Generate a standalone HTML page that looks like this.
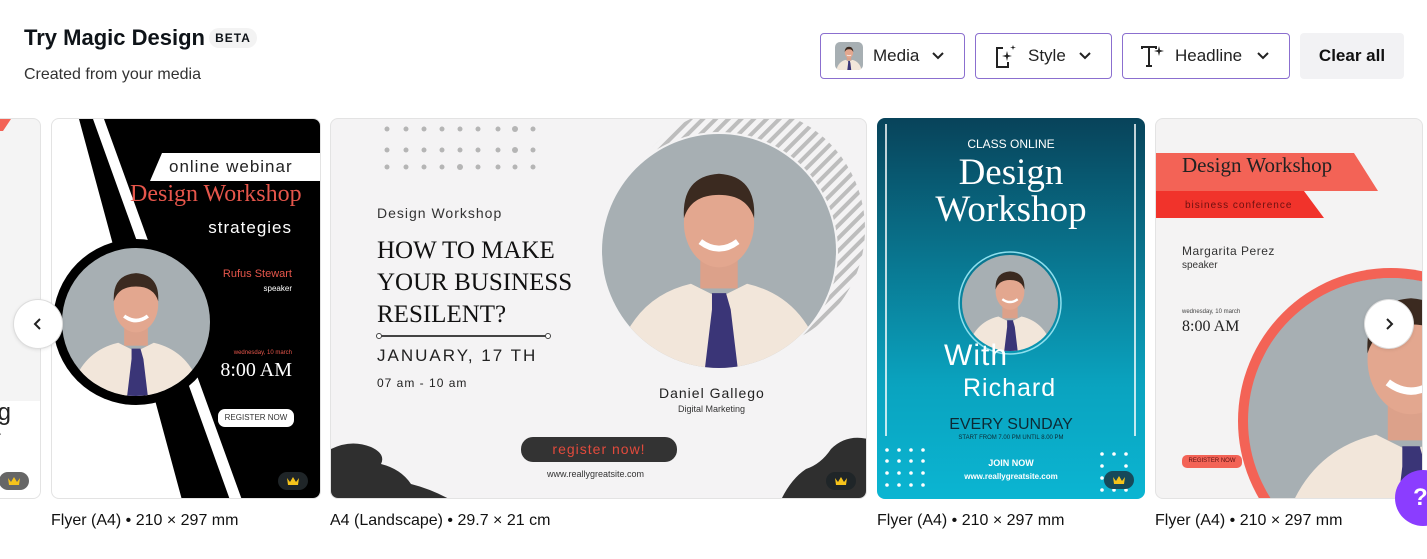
<!DOCTYPE html>
<html><head><meta charset="utf-8">
<style>
*{margin:0;padding:0;box-sizing:border-box}
body{width:1427px;height:559px;overflow:hidden;background:#fff;font-family:"Liberation Sans",sans-serif;position:relative;color:#0e1318}
.abs{position:absolute}
.btn{position:absolute;top:33px;height:46px;border:1.5px solid #8b6fcf;border-radius:4px;display:flex;align-items:center;font-size:17px;color:#222}
.card{position:absolute;top:118px;height:381px;border-radius:8px;overflow:hidden;border:1px solid #e3e3e3}
.cap{position:absolute;top:512px;font-size:16px;color:#111}
.crown{position:absolute;width:30px;height:18px;border-radius:9px;background:#1f2528;display:flex;align-items:center;justify-content:center}
.serif{font-family:"Liberation Serif",serif}
.arrow{position:absolute;width:48px;height:48px;border-radius:50%;background:#fff;box-shadow:0 0 0 1px #ddd,0 1px 4px rgba(0,0,0,.15);display:flex;align-items:center;justify-content:center}
</style></head><body>
<svg width="0" height="0" style="position:absolute">
<defs>
<symbol id="p" viewBox="0 0 100 100">
<rect width="100" height="100" fill="#a7afb3"/>
<path d="M5 100 Q12 70 38 64 L50 70 L62 64 Q88 70 95 100Z" fill="#f2e6da"/>
<path d="M47 68 L53 68 L55 75 L58 100 L44 100 L47 75Z" fill="#3a3577"/>
<rect x="42" y="50" width="16" height="16" fill="#dca18a"/>
<ellipse cx="50" cy="38" rx="15" ry="19" fill="#e3a78f"/>
<path d="M35 36 Q34 18 50 17 Q66 18 65 36 Q62 26 50 26 Q38 26 35 36Z" fill="#3b2a20"/>
<path d="M42 46 Q50 52 58 46" stroke="#fff" stroke-width="2.5" fill="none"/>
</symbol>
<symbol id="cr" viewBox="0 0 14 10"><path d="M1 2 L4 6 L7 1 L10 6 L13 2 L12 9 L2 9Z" fill="#f5c31b"/></symbol>
</defs></svg>

<div class="abs" style="left:24px;top:25px;font-size:22px;font-weight:bold;color:#0e1318">Try Magic Design</div>
<div class="abs" style="left:209px;top:28px;width:48px;height:20px;border-radius:10px;background:#f3f3f3;font-size:12px;font-weight:bold;letter-spacing:1px;text-align:center;line-height:20px">BETA</div>
<div class="abs" style="left:24px;top:66px;font-size:16px;color:#333">Created from your media</div>

<div class="btn" style="left:820px;width:145px"><svg style="margin-left:14px" width="28" height="28"><defs><clipPath id="r"><rect width="28" height="28" rx="5"/></clipPath></defs><g clip-path="url(#r)"><use href="#p" width="28" height="28"/></g></svg><span style="margin-left:10px">Media</span><svg style="margin-left:12px" width="14" height="10"><path d="M2 2 L7 7 L12 2" stroke="#222" stroke-width="2" fill="none"/></svg></div>
<div class="btn" style="left:975px;width:137px"><svg style="margin-left:18px" width="24" height="26"><path d="M9 5 H3 V24 H14 V19" stroke="#222" stroke-width="2" fill="none"/><path d="M13 8 L14 12 L18 13 L14 14 L13 18 L12 14 L8 13 L12 12Z M19 2 L19.7 4 L22 4.5 L19.7 5 L19 7 L18.3 5 L16 4.5 L18.3 4Z" fill="#222"/></svg><span style="margin-left:10px">Style</span><svg style="margin-left:12px" width="14" height="10"><path d="M2 2 L7 7 L12 2" stroke="#222" stroke-width="2" fill="none"/></svg></div>
<div class="btn" style="left:1122px;width:168px"><svg style="margin-left:16px" width="26" height="26"><path d="M3 6 V4 H17 V6 M10 4 V23 M7 23 H13" stroke="#222" stroke-width="2" fill="none"/><path d="M20 3 L21 7 L25 8 L21 9 L20 13 L19 9 L15 8 L19 7Z" fill="#222"/></svg><span style="margin-left:10px">Headline</span><svg style="margin-left:14px" width="14" height="10"><path d="M2 2 L7 7 L12 2" stroke="#222" stroke-width="2" fill="none"/></svg></div>
<div class="abs" style="left:1300px;top:33px;width:104px;height:46px;border-radius:4px;background:#f2f2f4;font-size:17px;font-weight:bold;text-align:center;line-height:46px;color:#111">Clear all</div>

<!-- card0 partial -->
<div class="card" style="left:-10px;width:51px;background:#f4f4f4">
<div class="abs" style="left:0;top:0;width:20px;height:12px;background:#f36356;clip-path:polygon(0 0,100% 0,60% 100%,0 100%)"></div>
<div class="abs" style="left:0;top:282px;width:51px;height:100px;background:#fff"></div>
<div class="abs" style="left:0;top:280px;font-size:24px;color:#222">&nbsp;g</div>
<div class="abs" style="left:0;top:310px;font-size:16px;color:#222">&nbsp;r</div>
<div class="crown" style="left:8px;top:353px;background:#666"><svg width="14" height="10"><use href="#cr"/></svg></div>
</div>

<!-- card1 -->
<div class="card" style="left:51px;width:270px;background:#fff">
<svg class="abs" style="left:0;top:0" width="270" height="381">
<defs><clipPath id="c1"><circle cx="84" cy="203" r="74"/></clipPath></defs>
<polygon points="27,0 270,0 270,381 130,381" fill="#000"/>
<polygon points="41,0 52,0 190,381 178,381" fill="#fff"/>
<circle cx="84" cy="203" r="83" fill="#000"/>
<g clip-path="url(#c1)"><use href="#p" x="10" y="129" width="148" height="148"/></g>
<polygon points="110,34 270,34 270,62 98,62" fill="#fff"/>
</svg>
<div class="abs" style="left:117px;top:38px;font-size:17px;letter-spacing:1px;color:#222">online webinar</div>
<div class="abs serif" style="left:78px;top:62px;font-size:24px;color:#e6564b">Design Workshop</div>
<div class="abs" style="right:28px;top:99px;font-size:17px;letter-spacing:1px;color:#fff">strategies</div>
<div class="abs" style="right:28px;top:149px;font-size:11px;color:#e6564b">Rufus Stewart</div>
<div class="abs" style="right:28px;top:165px;font-size:8px;color:#fff">speaker</div>
<div class="abs" style="right:28px;top:231px;font-size:6px;color:#e6564b">wednesday, 10 march</div>
<div class="abs serif" style="right:28px;top:240px;font-size:20px;color:#fff">8:00 AM</div>
<div class="abs" style="left:166px;top:290px;width:76px;height:18px;background:#fff;border-radius:7px;font-size:8px;text-align:center;line-height:18px;color:#333">REGISTER NOW</div>
<div class="crown" style="left:226px;top:353px"><svg width="14" height="10"><use href="#cr"/></svg></div>
</div>
<div class="cap" style="left:51px">Flyer (A4) • 210 × 297 mm</div>

<!-- card2 -->
<div class="card" style="left:330px;width:537px;background:#f4f3f4">
<svg class="abs" style="left:0;top:0" width="537" height="381">
<defs><pattern id="st" width="9" height="9" patternUnits="userSpaceOnUse" patternTransform="rotate(45)"><rect width="4" height="9" fill="#bdbdbd"/></pattern>
<clipPath id="c2"><circle cx="388" cy="132" r="117"/></clipPath></defs>
<g fill="#b5b5b5">
<circle cx="56" cy="10" r="2.5"/><circle cx="75" cy="10" r="2.5"/><circle cx="93" cy="10" r="2.5"/><circle cx="111" cy="10" r="2.5"/><circle cx="129" cy="10" r="2.5"/><circle cx="147" cy="10" r="2.5"/><circle cx="167" cy="10" r="2.5"/><circle cx="184" cy="10" r="3"/><circle cx="202" cy="10" r="2.5"/>
<circle cx="56" cy="31" r="2.5"/><circle cx="75" cy="31" r="2.5"/><circle cx="93" cy="31" r="2.5"/><circle cx="111" cy="31" r="2.5"/><circle cx="129" cy="31" r="2.5"/><circle cx="147" cy="31" r="2.5"/><circle cx="167" cy="31" r="2.5"/><circle cx="184" cy="31" r="3"/><circle cx="202" cy="31" r="2.5"/>
<circle cx="56" cy="48" r="2.5"/><circle cx="75" cy="48" r="2.5"/><circle cx="93" cy="48" r="2.5"/><circle cx="111" cy="48" r="2.5"/><circle cx="129" cy="48" r="3"/><circle cx="147" cy="48" r="2.5"/><circle cx="167" cy="48" r="2.5"/><circle cx="184" cy="48" r="2.5"/><circle cx="202" cy="48" r="2.5"/>
</g>
<circle cx="412" cy="110" r="122" fill="url(#st)"/>
<circle cx="388" cy="132" r="119" fill="#f4f3f4"/>
<g clip-path="url(#c2)"><use href="#p" x="271" y="15" width="234" height="234"/></g>
<line x1="48" y1="217" x2="217" y2="217" stroke="#444" stroke-width="2"/>
<circle cx="48" cy="217" r="2.5" fill="#fff" stroke="#444"/><circle cx="217" cy="217" r="2.5" fill="#fff" stroke="#444"/>
<path d="M0 330 Q20 320 40 328 Q55 335 50 345 Q70 350 80 365 Q100 370 120 381 L0 381Z" fill="#2f2f2f"/>
<path d="M537 320 Q515 315 500 330 Q490 345 475 350 Q460 360 450 381 L537 381Z" fill="#2f2f2f"/>
</svg>
<div class="abs" style="left:46px;top:86px;font-size:14px;letter-spacing:1px;color:#333">Design Workshop</div>
<div class="abs serif" style="left:46px;top:116px;font-size:25px;line-height:32px;color:#111">HOW TO MAKE<br>YOUR BUSINESS<br>RESILENT?</div>
<div class="abs" style="left:46px;top:227px;font-size:17px;letter-spacing:2px;color:#222">JANUARY, 17 TH</div>
<div class="abs" style="left:46px;top:257px;font-size:12px;letter-spacing:1px;color:#222">07 am - 10 am</div>
<div class="abs" style="left:328px;top:266px;font-size:14px;letter-spacing:1px;color:#222">Daniel Gallego</div>
<div class="abs" style="left:347px;top:285px;font-size:9px;color:#333">Digital Marketing</div>
<div class="abs" style="left:190px;top:318px;width:156px;height:25px;border-radius:12px;background:#333;color:#e24a3c;font-size:14px;text-align:center;line-height:25px;letter-spacing:1px">register now!</div>
<div class="abs" style="left:216px;top:350px;font-size:9px;color:#333">www.reallygreatsite.com</div>
<div class="crown" style="left:495px;top:353px"><svg width="14" height="10"><use href="#cr"/></svg></div>
</div>
<div class="cap" style="left:330px">A4 (Landscape) • 29.7 × 21 cm</div>

<!-- card3 -->
<div class="card" style="left:877px;width:268px;background:linear-gradient(#08435a,#0aa3bf 70%,#0bb5d2);border:none">
<svg class="abs" style="left:0;top:0" width="268" height="381">
<defs><clipPath id="c3"><circle cx="133" cy="185" r="48"/></clipPath></defs>
<line x1="9" y1="6" x2="9" y2="318" stroke="#fff" stroke-width="1.5"/>
<line x1="258" y1="6" x2="258" y2="318" stroke="#fff" stroke-width="1.5"/>
<g clip-path="url(#c3)"><use href="#p" x="85" y="137" width="96" height="96"/></g>
<circle cx="133" cy="185" r="51" fill="none" stroke="#8fe0ee" stroke-width="1.5"/>
<g fill="#fff"><circle cx="10" cy="332" r="1.8"/><circle cx="22" cy="332" r="1.8"/><circle cx="34" cy="332" r="1.8"/><circle cx="46" cy="332" r="1.8"/><circle cx="10" cy="343" r="1.8"/><circle cx="22" cy="343" r="1.8"/><circle cx="34" cy="343" r="1.8"/><circle cx="46" cy="343" r="1.8"/><circle cx="10" cy="355" r="1.8"/><circle cx="22" cy="355" r="1.8"/><circle cx="34" cy="355" r="1.8"/><circle cx="46" cy="355" r="1.8"/><circle cx="10" cy="367" r="1.8"/><circle cx="22" cy="367" r="1.8"/><circle cx="34" cy="367" r="1.8"/><circle cx="46" cy="367" r="1.8"/>
<circle cx="225" cy="336" r="1.8"/><circle cx="237" cy="336" r="1.8"/><circle cx="249" cy="336" r="1.8"/><circle cx="225" cy="348" r="1.8"/><circle cx="249" cy="348" r="1.8"/><circle cx="225" cy="360" r="1.8"/><circle cx="249" cy="360" r="1.8"/><circle cx="225" cy="372" r="1.8"/><circle cx="237" cy="372" r="1.8"/><circle cx="249" cy="372" r="1.8"/></g>
</svg>
<div class="abs" style="left:0;width:268px;top:19px;text-align:center;font-size:12px;color:#fff">CLASS ONLINE</div>
<div class="abs serif" style="left:0;width:268px;top:36px;text-align:center;font-size:37px;line-height:37px;color:#fff">Design<br>Workshop</div>
<div class="abs" style="left:67px;top:221px;font-size:30px;color:#fff;letter-spacing:1px">With</div>
<div class="abs" style="left:86px;top:256px;font-size:25px;color:#fff;letter-spacing:1px">Richard</div>
<div class="abs" style="left:0;width:268px;top:298px;text-align:center;font-size:16px;color:#0d2a34">EVERY SUNDAY</div>
<div class="abs" style="left:0;width:268px;top:317px;text-align:center;font-size:6px;color:#0d2a34">START FROM 7.00 PM UNTIL 8.00 PM</div>
<div class="abs" style="left:0;width:268px;top:340px;text-align:center;font-size:9px;font-weight:bold;color:#fff">JOIN NOW</div>
<div class="abs" style="left:0;width:268px;top:354px;text-align:center;font-size:8px;font-weight:bold;color:#fff">www.reallygreatsite.com</div>
<div class="crown" style="left:227px;top:353px;background:#16495a"><svg width="14" height="10"><use href="#cr"/></svg></div>
</div>
<div class="cap" style="left:877px">Flyer (A4) • 210 × 297 mm</div>

<!-- card4 -->
<div class="card" style="left:1155px;width:268px;background:#f4f3f3">
<svg class="abs" style="left:0;top:0" width="268" height="381">
<defs><clipPath id="c4"><circle cx="235" cy="302" r="143"/></clipPath></defs>
<polygon points="0,34 198,34 222,72 0,72" fill="#f36356"/>
<polygon points="0,72 148,72 168,99 0,99" fill="#f1332b"/>
<circle cx="235" cy="302" r="153" fill="#f36356"/>
<g clip-path="url(#c4)"><rect x="80" y="150" width="200" height="300" fill="#a7afb3"/><use href="#p" x="110" y="130" width="290" height="290"/></g>
</svg>
<div class="abs serif" style="left:26px;top:34px;font-size:21px;color:#222">Design Workshop</div>
<div class="abs" style="left:29px;top:81px;font-size:10px;letter-spacing:1px;color:#6b1010">bisiness conference</div>
<div class="abs" style="left:26px;top:125px;font-size:12px;letter-spacing:.5px;color:#333">Margarita Perez</div>
<div class="abs" style="left:26px;top:141px;font-size:10px;color:#333">speaker</div>
<div class="abs" style="left:26px;top:190px;font-size:6px;color:#444">wednesday, 10 march</div>
<div class="abs serif" style="left:26px;top:199px;font-size:16px;color:#222">8:00 AM</div>
<div class="abs" style="left:26px;top:336px;width:60px;height:13px;border-radius:5px;background:#f36356;font-size:6px;text-align:center;line-height:13px;color:#5a1010">REGISTER NOW</div>
</div>
<div class="cap" style="left:1155px">Flyer (A4) • 210 × 297 mm</div>

<div class="arrow" style="left:14px;top:300px"><svg width="12" height="14"><path d="M8 2 L3 7 L8 12" stroke="#222" stroke-width="2" fill="none"/></svg></div>
<div class="arrow" style="left:1365px;top:300px"><svg width="12" height="14"><path d="M4 2 L9 7 L4 12" stroke="#222" stroke-width="2" fill="none"/></svg></div>
<div class="abs" style="left:1395px;top:470px;width:56px;height:56px;border-radius:50%;background:#8b3dff;color:#fff;font-size:24px;font-weight:bold;line-height:56px;padding-left:18px">?</div>
</body></html>
